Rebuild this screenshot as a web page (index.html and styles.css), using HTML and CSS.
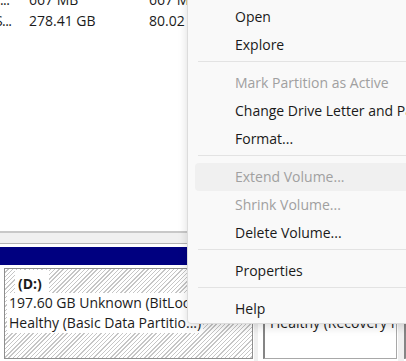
FILE: index.html
```html
<!DOCTYPE html>
<html>
<head>
<meta charset="utf-8">
<link rel="stylesheet" href="styles.css">
</head>
<body>
<div class="screen">
  <div class="list">
    <div class="rows">
      <div class="row"><span class="c1">...</span><span class="c2">667 MB</span><span class="c3">667 MB</span></div>
      <div class="row"><span class="c1 cut">S...</span><span class="c2">278.41 GB</span><span class="c3">80.02 GB</span></div>
    </div>
  </div>
  <div class="split"></div>
  <div class="diskpane">
    <div class="part part-d">
      <div class="bar"></div>
      <div class="body">
        <div class="box hatched">
          <div class="name"><span>(D:)</span></div>
          <div class="line"><span>197.60 GB Unknown (BitLocker Encrypted)</span></div>
          <div class="line"><span>Healthy (Basic Data Partitio...)</span></div>
        </div>
      </div>
    </div>
    <div class="part part-r">
      <div class="bar"></div>
      <div class="body">
        <div class="box plain">
          <div class="name"><span></span></div>
          <div class="line"><span>600 MB</span></div>
          <div class="line"><span>Healthy (Recovery Partition)</span></div>
        </div>
      </div>
    </div>
    <div class="part part-next">
      <div class="bar"></div>
      <div class="body"><div class="box plain"></div></div>
    </div>
  </div>

  <div class="menu">
    <div class="item">Open</div>
    <div class="item">Explore</div>
    <div class="sep"></div>
    <div class="item disabled">Mark Partition as Active</div>
    <div class="item">Change Drive Letter and Paths...</div>
    <div class="item">Format...</div>
    <div class="sep"></div>
    <div class="item disabled hover">Extend Volume...</div>
    <div class="item disabled">Shrink Volume...</div>
    <div class="item">Delete Volume...</div>
    <div class="sep"></div>
    <div class="item">Properties</div>
    <div class="sep"></div>
    <div class="item">Help</div>
  </div>
</div>
</body>
</html>
```

FILE: styles.css
```css
html, body {
  margin: 0;
  padding: 0;
  background: #ffffff;
}

.screen {
  position: relative;
  width: 406px;
  height: 361px;
  overflow: hidden;
  font-family: "Open Sans", "Noto Sans", sans-serif;
  font-size: 14px;
  color: #1b1b1b;
}

/* upper volume list */
.list {
  height: 231px;
  overflow: hidden;
  background: #ffffff;
}

.rows {
  margin-top: -11px;
}

.row {
  display: grid;
  grid-template-columns: 29px 120px 1fr;
  height: 21px;
  line-height: 21px;
  white-space: nowrap;
}

.c1 {
  overflow: hidden;
  letter-spacing: -0.6px;
}

.c1.cut {
  text-indent: -5px;
}

.split {
  height: 2px;
  background: #c8c8c8;
}

/* graphical disk pane */
.diskpane {
  height: 128px;
  background: #f0f0f0;
  display: flex;
  gap: 4px;
  padding-top: 10px;
  box-sizing: border-box;
}

.part {
  display: flex;
  flex-direction: column;
  flex: none;
  background: #ffffff;
  border-top: 1px solid #b4b4b4;
  padding-top: 3px;
}

.part-d {
  width: 254px;
}

.part-r {
  width: 140px;
}

.part-next {
  width: 20px;
  margin-left: 2px;
}

.bar {
  height: 18px;
  background: #000080;
  flex: none;
}

.body {
  padding: 3px 1px 2px 4px;
  flex: 1;
  display: flex;
}

.part-r .body {
  padding-left: 5px;
  padding-right: 1px;
}

.part-next .body {
  padding-left: 0;
}

.box {
  flex: 1;
  box-sizing: border-box;
  border: 1px solid #8e8e8e;
  height: 91px;
  white-space: nowrap;
  overflow: hidden;
}

.hatched {
  background: repeating-linear-gradient(135deg, #ffffff 0 2px, #c6c6c6 2px 3px);
}

.plain {
  background: #ffffff;
  border-color: #a8a8a8;
  border-left: 2px solid #858585;
}

.name {
  margin-top: 1px;
  height: 23px;
}

.name span {
  display: inline-block;
  background: #ffffff;
  font-weight: 700;
  line-height: 19px;
  padding: 4px 7px 0 3px;
  margin-left: 10px;
  height: 19px;
}

.line {
  height: 20px;
  line-height: 20px;
}

.line span {
  display: inline-block;
  background: #ffffff;
  padding: 0 2px;
  margin-left: 2px;
}

.plain .line span {
  margin-left: 3px;
}

/* context menu */
.menu {
  position: absolute;
  left: 187px;
  top: -10px;
  width: 260px;
  box-sizing: border-box;
  background: #f9f9f9;
  border: 1px solid #dcdcdc;
  border-radius: 4px;
  box-shadow: 0 3px 10px rgba(0, 0, 0, 0.14);
  padding: 12px 0 0 0;
}

.item {
  height: 28px;
  line-height: 28px;
  margin-left: 7px;
  padding-left: 40px;
  border-radius: 4px;
  white-space: nowrap;
  color: #1a1a1a;
}

.item.disabled {
  color: #a0a0a0;
}

.item.hover {
  background: #f0f0f0;
}

.sep {
  height: 1px;
  background: #e3e3e3;
  margin: 2px 0 7px 10px;
}
```
